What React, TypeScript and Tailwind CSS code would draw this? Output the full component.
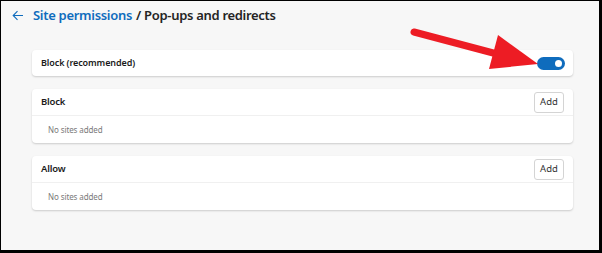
import React from 'react';

function Toggle() {
    return (
        <div className="w-[28px] h-[13px] rounded-full bg-[#0f6cbd] flex items-center justify-end pr-[3px]">
            <div className="w-[7px] h-[7px] rounded-full bg-white" />
        </div>
    );
}

function SiteList({ title }: { title: string }) {
    return (
        <div className="bg-white rounded-[4px] shadow-[0_1px_2px_rgba(0,0,0,0.18)]">
            <div className="h-[27px] flex items-center justify-between pl-[9px] pr-[9px] border-b border-[#f0f0f0]">
                <span className="text-[9.5px] font-semibold tracking-[-0.2px] text-[#1b1b1b]">{title}</span>
                <button className="w-[30px] h-[21px] border border-[#d4d4d4] rounded-[3px] text-[9.5px] text-[#333] bg-white">
                    Add
                </button>
            </div>
            <div className="h-[27px] flex items-center pl-[16px] text-[8px] tracking-[-0.1px] text-[#7a7a7a]">No sites added</div>
        </div>
    );
}

export default function App() {
    return (
        <div className="relative w-[602px] h-[253px] bg-[#f7f7f7] border-black border-t border-l border-r-[3px] border-b-[3px] font-['Segoe_UI','Noto_Sans',sans-serif]">
            {/* Header */}
            <div className="h-[29px] flex items-center pl-[11px]">
                <svg width="12" height="11" viewBox="0 0 12 11" className="mr-[9px]">
                    <path d="M11 5.5H1.5M5.5 1.2L1.2 5.5L5.5 9.8" fill="none" stroke="#0f6cbd" strokeWidth="1.1" />
                </svg>
                <span className="text-[13px] font-semibold tracking-[-0.3px] text-[#0f6cbd]">Site permissions</span>
                <span className="text-[13px] font-semibold tracking-[-0.3px] text-[#242424] ml-[4px]">/ Pop-ups and redirects</span>
            </div>

            <div className="ml-[31px] w-[541px] mt-[20px] flex flex-col gap-[13px]">
                <div className="h-[26px] bg-white rounded-[4px] shadow-[0_1px_2px_rgba(0,0,0,0.18)] flex items-center justify-between pl-[9px] pr-[8px]">
                    <span className="text-[9px] font-semibold tracking-[-0.1px] text-[#1b1b1b]">Block (recommended)</span>
                    <Toggle />
                </div>
                <SiteList title="Block" />
                <SiteList title="Allow" />
            </div>

            {/* annotation arrow */}
            <svg className="absolute left-0 top-0 pointer-events-none" width="602" height="253">
                <line x1="413" y1="31" x2="496" y2="53" stroke="#ed1c24" strokeWidth="7" strokeLinecap="round" />
                <polygon points="497,34 537,63 488,68" fill="#ed1c24" />
            </svg>
        </div>
    );
}
